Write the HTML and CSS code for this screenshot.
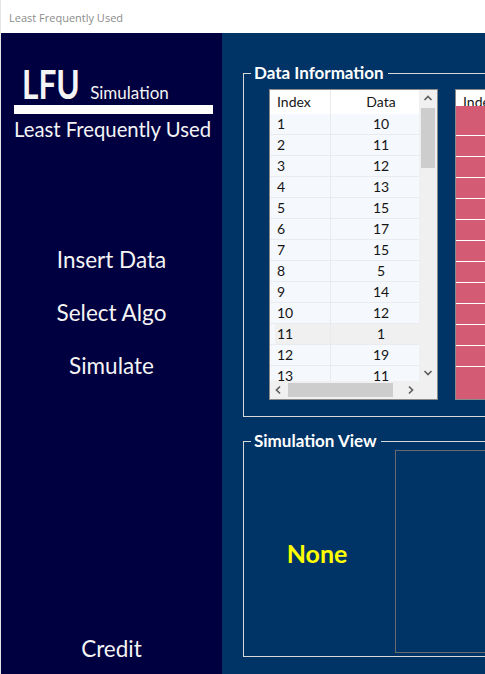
FILE: index.html
```html
<!DOCTYPE html>
<html lang="en">
<head>
<meta charset="utf-8">
<title>Least Frequently Used</title>
<link rel="stylesheet" href="styles.css">
</head>
<body>
<div class="window">
  <div class="titlebar">Least Frequently Used</div>
  <div class="app">
    <aside class="sidebar">
      <div class="logo">
        <div class="logo-top"><span class="lfu">LFU</span><span class="sim">Simulation</span></div>
        <div class="logo-bar"></div>
        <div class="logo-sub">Least Frequently Used</div>
      </div>
      <nav class="menu">
        <div class="menu-item">Insert Data</div>
        <div class="menu-item">Select Algo</div>
        <div class="menu-item">Simulate</div>
      </nav>
      <div class="credit">Credit</div>
    </aside>
    <main class="main">
      <fieldset class="group group-data">
        <legend>Data Information</legend>
        <div class="tables">
          <div class="listview">
            <div class="lv-body">
              <div class="lv-row lv-head"><div class="c-idx">Index</div><div class="c-data">Data</div></div>
              <div class="lv-row"><div class="c-idx">1</div><div class="c-data">10</div></div>
              <div class="lv-row"><div class="c-idx">2</div><div class="c-data">11</div></div>
              <div class="lv-row"><div class="c-idx">3</div><div class="c-data">12</div></div>
              <div class="lv-row"><div class="c-idx">4</div><div class="c-data">13</div></div>
              <div class="lv-row"><div class="c-idx">5</div><div class="c-data">15</div></div>
              <div class="lv-row"><div class="c-idx">6</div><div class="c-data">17</div></div>
              <div class="lv-row"><div class="c-idx">7</div><div class="c-data">15</div></div>
              <div class="lv-row"><div class="c-idx">8</div><div class="c-data">5</div></div>
              <div class="lv-row"><div class="c-idx">9</div><div class="c-data">14</div></div>
              <div class="lv-row"><div class="c-idx">10</div><div class="c-data">12</div></div>
              <div class="lv-row lv-sel"><div class="c-idx">11</div><div class="c-data">1</div></div>
              <div class="lv-row"><div class="c-idx">12</div><div class="c-data">19</div></div>
              <div class="lv-row"><div class="c-idx">13</div><div class="c-data">11</div></div>
            </div>
            <div class="vscroll">
              <svg class="arrow-v" viewBox="0 0 18 17" width="18" height="17"><polyline points="5.5,10 9,6.5 12.5,10"/></svg>
              <div class="vtrack"><div class="vthumb"></div></div>
              <svg class="arrow-v" viewBox="0 0 18 17" width="18" height="17"><polyline points="5.5,7 9,10.5 12.5,7"/></svg>
            </div>
            <div class="hscroll">
              <svg class="arrow-h" viewBox="0 0 17 18" width="17" height="18"><polyline points="10,5.5 6.5,9 10,12.5"/></svg>
              <div class="htrack"><div class="hthumb"></div></div>
              <svg class="arrow-h" viewBox="0 0 17 18" width="17" height="18"><polyline points="7,5.5 10.5,9 7,12.5"/></svg>
            </div>
            <div class="corner"></div>
          </div>
          <div class="listview pink">
            <div class="pk-body">
              <div class="pk-head">Index</div>
              <div class="pk-row pk-first"></div>
              <div class="pk-row"></div>
              <div class="pk-row"></div>
              <div class="pk-row"></div>
              <div class="pk-row"></div>
              <div class="pk-row"></div>
              <div class="pk-row"></div>
              <div class="pk-row"></div>
              <div class="pk-row"></div>
              <div class="pk-row"></div>
              <div class="pk-row"></div>
              <div class="pk-row"></div>
            </div>
          </div>
        </div>
      </fieldset>
      <fieldset class="group group-sim">
        <legend>Simulation View</legend>
        <div class="sim-wrap">
          <div class="none">None</div>
          <div class="canvas"></div>
        </div>
      </fieldset>
    </main>
  </div>
</div>
</body>
</html>
```
FILE: styles.css
```css
html, body {
  margin: 0;
  padding: 0;
}
body {
  width: 485px;
  height: 674px;
  overflow: hidden;
  background: #003366;
  font-family: Lato, "DejaVu Sans", sans-serif;
}
.window {
  display: flex;
  flex-direction: column;
  height: 674px;
  border-left: 1px solid #e4e4e4;
}
.titlebar {
  flex: none;
  height: 33px;
  box-sizing: border-box;
  padding: 3px 0 0 8px;
  line-height: 30px;
  background: #ffffff;
  color: #8c8c8c;
  font-family: "Open Sans", "Noto Sans", sans-serif;
  font-size: 11px;
}
.app {
  flex: 1;
  display: flex;
  min-height: 0;
}
.sidebar {
  flex: none;
  width: 221px;
  background: #000040;
  color: #f4f4f4;
  display: flex;
  flex-direction: column;
}
.logo {
  margin-top: 31px;
  padding-left: 13px;
}
.logo-top {
  display: flex;
  align-items: baseline;
  padding-left: 8px;
  height: 40px;
}
.lfu {
  display: inline-block;
  font-weight: bold;
  font-size: 40px;
  line-height: 40px;
  transform: scaleX(0.79);
  transform-origin: left center;
  margin-right: -15px;
}
.sim {
  margin-left: 10px;
  font-size: 17px;
}
.logo-bar {
  width: 199px;
  height: 9px;
  margin-top: 1px;
  background: #ffffff;
}
.logo-sub {
  margin-top: 3px;
  font-size: 20.3px;
  line-height: 24px;
}
.menu {
  margin-top: 92px;
  display: flex;
  flex-direction: column;
}
.menu-item {
  height: 53px;
  line-height: 53px;
  text-align: center;
  font-size: 22.5px;
}
.credit {
  margin-top: auto;
  margin-bottom: 5px;
  line-height: 40px;
  text-align: center;
  font-size: 22.5px;
}
.main {
  flex: 1;
  min-width: 0;
  overflow: hidden;
  padding-left: 21px;
}
.group {
  margin: 0;
  padding: 0;
  border: 1px solid #d8d8d8;
  width: 360px;
  min-width: 0;
  box-sizing: border-box;
}
.group legend {
  margin-left: 7px;
  padding: 0 4px 0 3px;
  color: #ffffff;
  font-weight: bold;
  font-size: 17px;
  line-height: 18px;
}
.group-data {
  margin-top: 31px;
  padding: 7px 0 16px 0;
}
.group-sim {
  margin-top: 15px;
  padding: 0 0 3px 0;
}
.tables {
  display: flex;
  gap: 17px;
  padding-left: 25px;
}
.listview {
  flex: none;
  width: 169px;
  height: 311px;
  box-sizing: border-box;
  border: 1px solid #8a8a8a;
  display: grid;
  grid-template-columns: 149px 18px;
  grid-template-rows: 291px 18px;
  background: #f0f0f0;
}
.lv-body {
  overflow: hidden;
  background: #f5f8fc;
}
.lv-row {
  display: flex;
  height: 20px;
  border-bottom: 1px solid #e8ebf0;
  font-size: 14px;
  line-height: 20px;
  color: #151515;
}
.lv-head {
  height: 24px;
  line-height: 24px;
  border-bottom: 0;
  background: #ffffff;
}
.c-idx {
  flex: none;
  width: 61px;
  box-sizing: border-box;
  padding-left: 7px;
  border-right: 1px solid #eaeaea;
}
.c-data {
  flex: none;
  width: 100px;
  text-align: center;
}
.lv-sel {
  background: linear-gradient(to right, #f5f8fc 5px, #f0f0f0 5px);
}
.vscroll {
  display: flex;
  flex-direction: column;
  background: #f0f0f0;
}
.vtrack {
  flex: 1;
}
.vthumb {
  margin: 1px 2px 0 2px;
  height: 60px;
  background: #cdcdcd;
}
.hscroll {
  display: flex;
  background: #f0f0f0;
}
.htrack {
  flex: 1;
}
.hthumb {
  margin: 2px 0 0 1px;
  width: 105px;
  height: 14px;
  background: #cdcdcd;
}
.arrow-v, .arrow-h {
  flex: none;
  display: block;
  fill: none;
  stroke: #606060;
  stroke-width: 1.7;
}
.corner {
  background: #f0f0f0;
}
.pink {
  display: block;
  background: #d35b73;
}
.pk-body {
  height: 100%;
  overflow: hidden;
}
.pk-head {
  height: 16px;
  overflow: hidden;
  background: #ffffff;
  padding-left: 7px;
  font-size: 14px;
  line-height: 24px;
  color: #151515;
}
.pk-row {
  height: 20px;
  border-bottom: 1px solid #ffffff;
}
.pk-first {
  height: 29px;
}
.sim-wrap {
  display: flex;
  height: 203px;
}
.none {
  flex: none;
  width: 151px;
  padding: 2px 5px 0 0;
  box-sizing: border-box;
  display: flex;
  align-items: center;
  justify-content: center;
  color: #ffff00;
  font-weight: bold;
  font-size: 25px;
}
.canvas {
  flex: none;
  width: 200px;
  box-sizing: border-box;
  border: 1px solid #6a6a6a;
}
```
